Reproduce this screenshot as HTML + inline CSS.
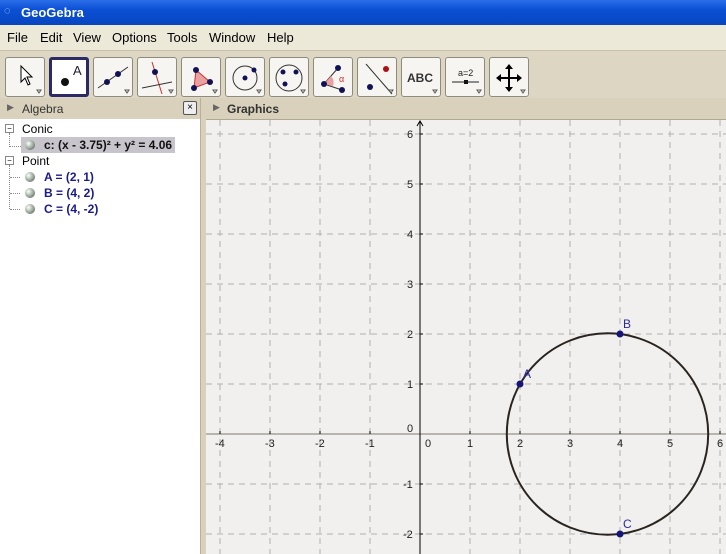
<!DOCTYPE html><html><head><style>
body{margin:0;width:726px;height:554px;overflow:hidden;font-family:"Liberation Sans",sans-serif;background:#ece9d8;position:relative}
.t{position:absolute;left:0;top:0;width:726px;height:25px;background:linear-gradient(#2b6ee8,#0a4fd4 40%,#0846c0);color:#fff;font-weight:bold;font-size:13px}
.m{position:absolute;top:25px;left:0;width:726px;height:25px;background:#ece9d8;font-size:13px}
.m span{position:absolute;top:5px}
.tb{position:absolute;top:50px;left:0;width:726px;height:48px;background:#ddd6c3;border-top:1px solid #c8c0ab}
.b{position:absolute;top:6px;width:38px;height:38px;border:1px solid #8d8a80;border-radius:3px;background:#f6f5f1}
.b svg{position:absolute;left:0;top:0}
.h{position:absolute;top:98px;height:21px;background:#d9d1bb;font-size:12px}
</style></head><body>
<div class="t"><span style="position:absolute;left:4px;top:5px;font-size:11px;color:#cde">◌</span><span style="position:absolute;left:21px;top:5px">GeoGebra</span></div>
<div class="m"><span style="left:7px">File</span><span style="left:40px">Edit</span><span style="left:73px">View</span><span style="left:112px">Options</span><span style="left:167px">Tools</span><span style="left:209px">Window</span><span style="left:267px">Help</span></div>
<div class="tb">
<div class="b" style="left:5px"><svg width="38" height="38"><path d="M15 8 L15 24 L19 20 L22 27 L24 26 L21 19 L26 19 Z" fill="#fff" stroke="#000"/><path d="M31 32l4 0-2 3z" fill="none" stroke="#555"/></svg></div>
<div class="b" style="left:49px;border:3px solid #2c2a66;width:34px;height:34px;background:#fff"><svg width="34" height="34"><circle cx="13" cy="22" r="4" fill="#111"/><text x="21" y="15" font-size="13" fill="#223" font-family="Liberation Sans">A</text></svg></div>
<div class="b" style="left:93px"><svg width="38" height="38"><line x1="4" y1="30" x2="34" y2="9" stroke="#333"/><circle cx="13" cy="24" r="3" fill="#115"/><circle cx="24" cy="16" r="3" fill="#115"/><path d="M31 32l4 0-2 3z" fill="none" stroke="#555"/></svg></div>
<div class="b" style="left:137px"><svg width="38" height="38"><line x1="14" y1="4" x2="24" y2="36" stroke="#c33"/><line x1="4" y1="30" x2="34" y2="24" stroke="#333"/><circle cx="17" cy="14" r="3" fill="#115"/><path d="M31 32l4 0-2 3z" fill="none" stroke="#555"/></svg></div>
<div class="b" style="left:181px"><svg width="38" height="38"><path d="M14 12 L28 24 L12 30Z" fill="#e9a0a0" stroke="#c33"/><circle cx="14" cy="12" r="3" fill="#115"/><circle cx="28" cy="24" r="3" fill="#115"/><circle cx="12" cy="30" r="3" fill="#115"/><path d="M31 32l4 0-2 3z" fill="none" stroke="#555"/></svg></div>
<div class="b" style="left:225px"><svg width="38" height="38"><circle cx="19" cy="20" r="12" fill="none" stroke="#333"/><circle cx="19" cy="20" r="2.5" fill="#115"/><circle cx="28" cy="12" r="2.5" fill="#115"/><path d="M31 32l4 0-2 3z" fill="none" stroke="#555"/></svg></div>
<div class="b" style="left:269px"><svg width="38" height="38"><circle cx="19" cy="20" r="13" fill="none" stroke="#333"/><circle cx="13" cy="14" r="2.5" fill="#115"/><circle cx="26" cy="14" r="2.5" fill="#115"/><circle cx="15" cy="26" r="2.5" fill="#115"/><path d="M31 32l4 0-2 3z" fill="none" stroke="#555"/></svg></div>
<div class="b" style="left:313px"><svg width="38" height="38"><path d="M10 26 L24 10 M10 26 L28 32" stroke="#333" fill="none"/><path d="M17 18 A10 10 0 0 1 19 28 L10 26Z" fill="#e9a0a0"/><circle cx="10" cy="26" r="3" fill="#115"/><circle cx="24" cy="10" r="3" fill="#115"/><circle cx="28" cy="32" r="3" fill="#115"/><text x="25" y="24" font-size="9" fill="#c33">α</text></svg></div>
<div class="b" style="left:357px"><svg width="38" height="38"><line x1="8" y1="6" x2="34" y2="36" stroke="#333"/><circle cx="28" cy="11" r="3" fill="#a11"/><circle cx="12" cy="29" r="3" fill="#115"/><path d="M31 32l4 0-2 3z" fill="none" stroke="#555"/></svg></div>
<div class="b" style="left:401px"><svg width="38" height="38"><text x="5" y="24" font-size="12" font-weight="bold" fill="#333" font-family="Liberation Sans">ABC</text><path d="M31 32l4 0-2 3z" fill="none" stroke="#555"/></svg></div>
<div class="b" style="left:445px"><svg width="38" height="38"><text x="12" y="18" font-size="9" fill="#222" font-family="Liberation Sans">a=2</text><line x1="6" y1="24" x2="33" y2="24" stroke="#222"/><rect x="18" y="22" width="4" height="4" fill="#111"/><path d="M31 32l4 0-2 3z" fill="none" stroke="#555"/></svg></div>
<div class="b" style="left:489px"><svg width="38" height="38"><path d="M19 8V32M8 20H30" stroke="#000" stroke-width="2"/><path d="M19 6l-4 5h8zM19 34l-4-5h8zM6 20l5-4v8zM32 20l-5-4v8z" fill="#000"/><path d="M31 32l4 0-2 3z" fill="none" stroke="#555"/></svg></div>
</div>
<div class="h" style="left:0;width:200px;border-bottom:1px solid #b0a890"><span style="position:absolute;left:7px;top:4px;font-size:9px;color:#666">▶</span><span style="position:absolute;left:22px;top:4px;color:#333">Algebra</span><span style="position:absolute;left:183px;top:3px;width:12px;height:12px;border:1px solid #555;border-radius:2px;font-size:10px;line-height:12px;text-align:center;background:#eee">×</span></div>
<div style="position:absolute;left:200px;top:98px;width:6px;height:456px;background:#d9d1bb;border-left:1px solid #b8b09a"></div>
<div class="h" style="left:206px;width:520px;border-bottom:1px solid #b0a890"><span style="position:absolute;left:7px;top:4px;font-size:9px;color:#666">▶</span><span style="position:absolute;left:21px;top:4px;font-weight:bold;color:#333">Graphics</span></div>
<div style="position:absolute;left:0;top:119px;width:200px;height:435px;background:#fff;font-size:12px">
<div style="position:absolute;left:5px;top:5px;width:7px;height:7px;border:1px solid #888;font-size:8px;line-height:7px;text-align:center">−</div>
<span style="position:absolute;left:22px;top:3px">Conic</span>
<div style="position:absolute;left:9px;top:14px;height:13px;width:11px;border-left:1px dotted #888;border-bottom:1px dotted #888"></div>
<div style="position:absolute;left:21px;top:18px;width:154px;height:16px;background:#c8c4cc"></div>
<div style="position:absolute;left:25px;top:21px;width:10px;height:10px;border-radius:50%;background:radial-gradient(circle at 35% 35%,#fff,#8a9a8a 60%,#445)"></div>
<span style="position:absolute;left:44px;top:19px;font-weight:bold;color:#111">c: (x - 3.75)² + y² = 4.06</span>
<div style="position:absolute;left:5px;top:37px;width:7px;height:7px;border:1px solid #888;font-size:8px;line-height:7px;text-align:center">−</div>
<span style="position:absolute;left:22px;top:35px">Point</span>
<div style="position:absolute;left:9px;top:46px;height:44px;width:11px;border-left:1px dotted #888"></div>
<div style="position:absolute;left:10px;top:58px;width:10px;border-top:1px dotted #888"></div>
<div style="position:absolute;left:10px;top:74px;width:10px;border-top:1px dotted #888"></div>
<div style="position:absolute;left:10px;top:90px;width:10px;border-top:1px dotted #888"></div>
<div style="position:absolute;left:25px;top:53px;width:10px;height:10px;border-radius:50%;background:radial-gradient(circle at 35% 35%,#fff,#8a9a8a 60%,#445)"></div>
<div style="position:absolute;left:25px;top:69px;width:10px;height:10px;border-radius:50%;background:radial-gradient(circle at 35% 35%,#fff,#8a9a8a 60%,#445)"></div>
<div style="position:absolute;left:25px;top:85px;width:10px;height:10px;border-radius:50%;background:radial-gradient(circle at 35% 35%,#fff,#8a9a8a 60%,#445)"></div>
<span style="position:absolute;left:44px;top:51px;font-weight:bold;color:#1a1a8a">A = (2, 1)</span>
<span style="position:absolute;left:44px;top:67px;font-weight:bold;color:#1a1a8a">B = (4, 2)</span>
<span style="position:absolute;left:44px;top:83px;font-weight:bold;color:#1a1a8a">C = (4, -2)</span>
</div>
<svg style="position:absolute;left:0;top:0" width="726" height="554" viewBox="0 0 726 554">
<rect x="206" y="120" width="520" height="434" fill="#f1f0ee"/>
<g stroke="#b4b0b0" stroke-dasharray="6,5" stroke-width="1">
<path d="M220 120V554M270 120V554M320 120V554M370 120V554M470 120V554M520 120V554M570 120V554M620 120V554M670 120V554M720 120V554"/>
<path d="M206 134H726M206 184H726M206 234H726M206 284H726M206 334H726M206 384H726M206 484H726M206 534H726"/>
</g>
<line x1="206" y1="434" x2="726" y2="434" stroke="#b8b4b0" stroke-width="2"/>
<line x1="420" y1="122" x2="420" y2="554" stroke="#000"/>
<path d="M417 126L420 121L423 126" fill="none" stroke="#000"/>
<g stroke="#000"><path d="M220 431v3M270 431v3M320 431v3M370 431v3M470 431v3M520 431v3M570 431v3M620 431v3M670 431v3M720 431v3"/><path d="M420 134h3M420 184h3M420 234h3M420 284h3M420 334h3M420 384h3M420 484h3M420 534h3"/></g>
<g font-size="11" fill="#222" font-family="Liberation Sans">
<text x="215" y="447">-4</text><text x="265" y="447">-3</text><text x="315" y="447">-2</text><text x="365" y="447">-1</text><text x="425" y="447">0</text><text x="467" y="447">1</text><text x="517" y="447">2</text><text x="567" y="447">3</text><text x="617" y="447">4</text><text x="667" y="447">5</text><text x="717" y="447">6</text>
<text x="407" y="138">6</text><text x="407" y="188">5</text><text x="407" y="238">4</text><text x="407" y="288">3</text><text x="407" y="338">2</text><text x="407" y="388">1</text><text x="407" y="432">0</text><text x="403" y="488">-1</text><text x="403" y="538">-2</text>
</g>
<circle cx="607.5" cy="434" r="100.7" fill="none" stroke="#2a2420" stroke-width="2"/>
<g fill="#15157a"><circle cx="520" cy="384" r="3.5"/><circle cx="620" cy="334" r="3.5"/><circle cx="620" cy="534" r="3.5"/></g>
<g font-size="12" fill="#2a2aa0" font-family="Liberation Sans"><text x="523" y="378">A</text><text x="623" y="328">B</text><text x="623" y="528">C</text></g>
</svg>
</body></html>
